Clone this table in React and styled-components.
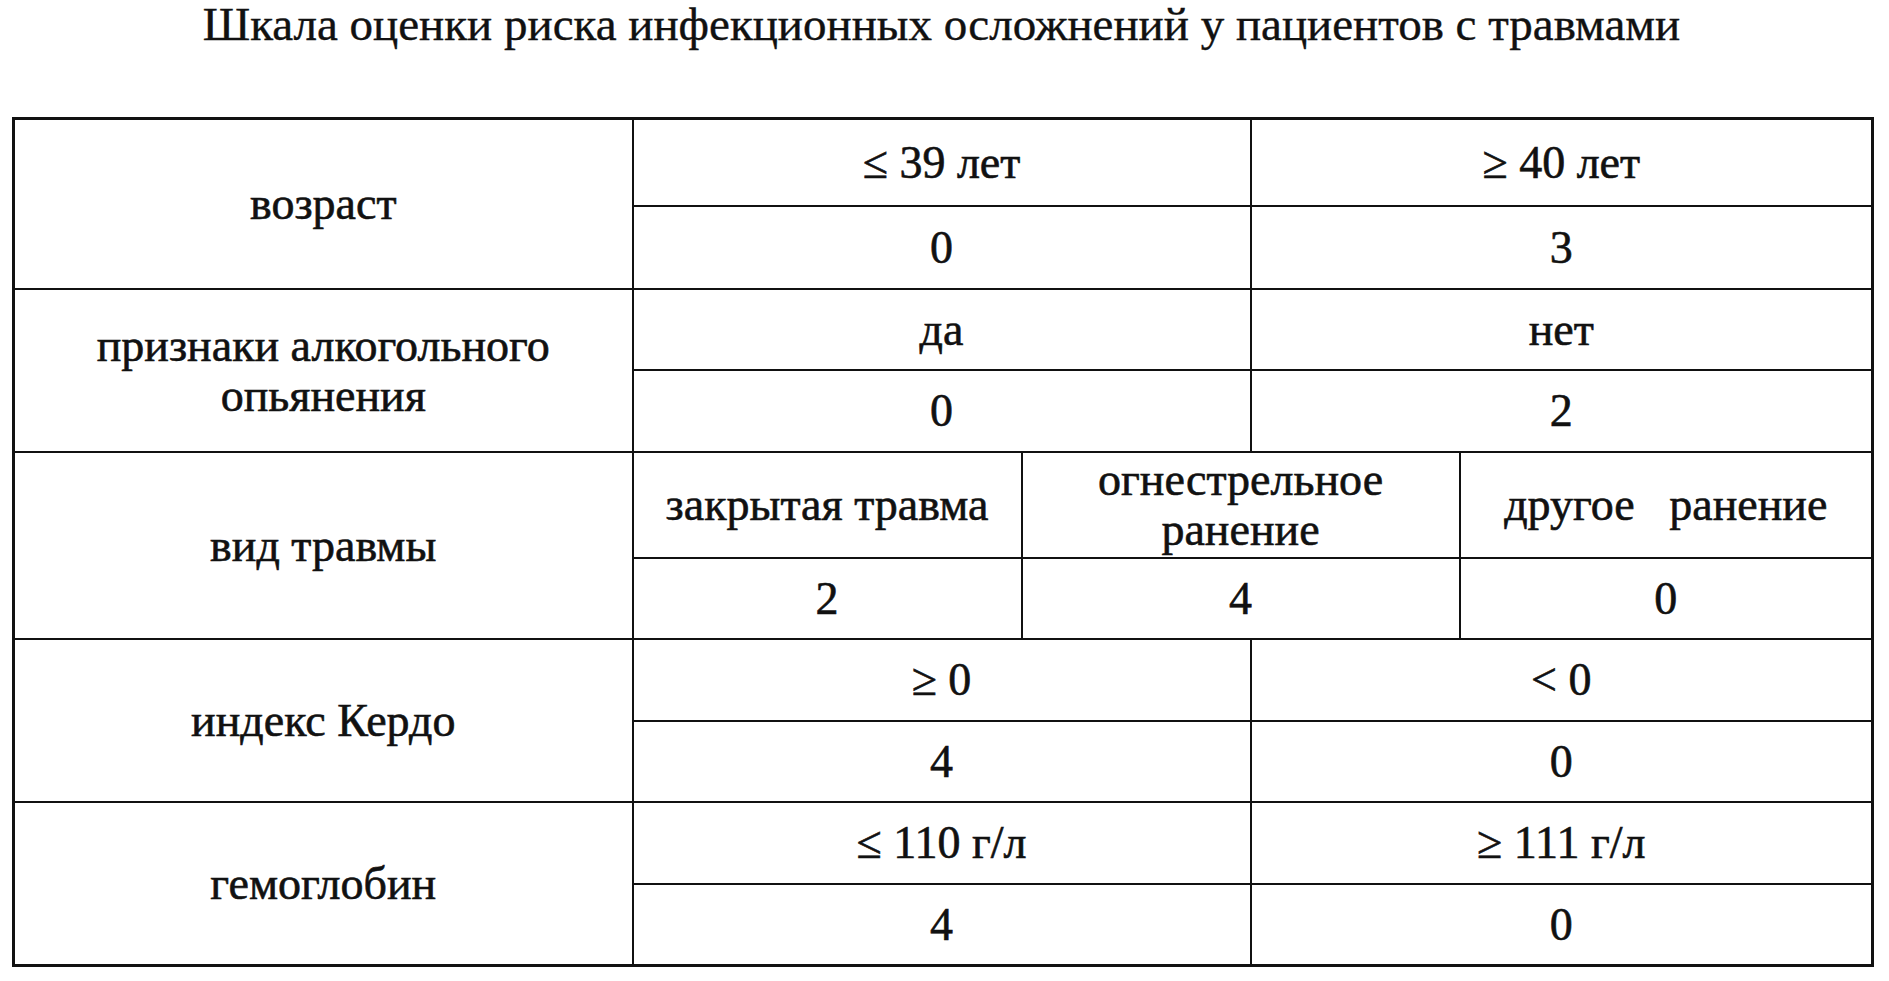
import React from 'react';
import styled, { createGlobalStyle } from 'styled-components';

const GlobalStyle = createGlobalStyle`
  body {
    margin: 0;
    background: #fff;
    color: #111;
    font-family: "Liberation Serif", "Times New Roman", serif;
  }
`;

const Page = styled.div`
  width: 1859px;
  padding: 1px 0 0 12px;
`;

const Title = styled.h1`
  margin: 0 0 69px;
  font-size: 47px;
  line-height: 47px;
  font-weight: normal;
  text-align: center;
  -webkit-text-stroke: 0.4px #111;
`;

const Table = styled.table`
  width: 1859px;
  table-layout: fixed;
  border-collapse: collapse;
  border: 3px solid #111;
`;

const Cell = styled.td`
  height: ${props => props.h - 2}px;
  padding: 0 8px;
  border: 2px solid #111;
  font-size: 46px;
  line-height: 1.08;
  text-align: center;
  vertical-align: middle;
  -webkit-text-stroke: 0.6px #111;
  white-space: ${props => (props.pre ? 'pre' : 'normal')};
`;

const Label = styled(Cell)`
  padding: 0 12px;
`;

// ширины колонок: подпись | a | b | c | d
const widths = [619, 389, 229, 209, 413];

const rows = [
  { label: 'возраст', h: [87, 83], split: 2, top: ['≤ 39 лет', '≥ 40 лет'], bottom: ['0', '3'] },
  { label: <>признаки алкогольного<br />опьянения</>, h: [81, 82], split: 2, top: ['да', 'нет'], bottom: ['0', '2'] },
  { label: 'вид травмы', h: [106, 81], split: 3, top: ['закрытая травма', <>огнестрельное<br />ранение</>, 'другое   ранение'], bottom: ['2', '4', '0'] },
  { label: 'индекс Кердо', h: [82, 81], split: 2, top: ['≥ 0', '< 0'], bottom: ['4', '0'] },
  { label: 'гемоглобин', h: [82, 81], split: 2, top: ['≤ 110 г/л', '≥ 111 г/л'], bottom: ['4', '0'] },
];

const spans = { 2: [2, 2], 3: [1, 2, 1] };

const ValueCells = ({ items, split, h }) =>
  items.map((item, i) => (
    <Cell key={i} h={h} colSpan={spans[split][i]} pre={typeof item === 'string'}>
      {item}
    </Cell>
  ));

const App = () => {
  return (
    <>
      <GlobalStyle />
      <Page>
        <Title>Шкала оценки риска инфекционных осложнений у пациентов с травмами</Title>
        <Table>
          <colgroup>
            {widths.map((w, i) => (
              <col key={i} style={{ width: w }} />
            ))}
          </colgroup>
          <tbody>
            {rows.map((row, r) => (
              <React.Fragment key={r}>
                <tr>
                  <Label rowSpan={2} h={row.h[0]}>{row.label}</Label>
                  <ValueCells items={row.top} split={row.split} h={row.h[0]} />
                </tr>
                <tr>
                  <ValueCells items={row.bottom} split={row.split} h={row.h[1]} />
                </tr>
              </React.Fragment>
            ))}
          </tbody>
        </Table>
      </Page>
    </>
  );
};

export default App;
